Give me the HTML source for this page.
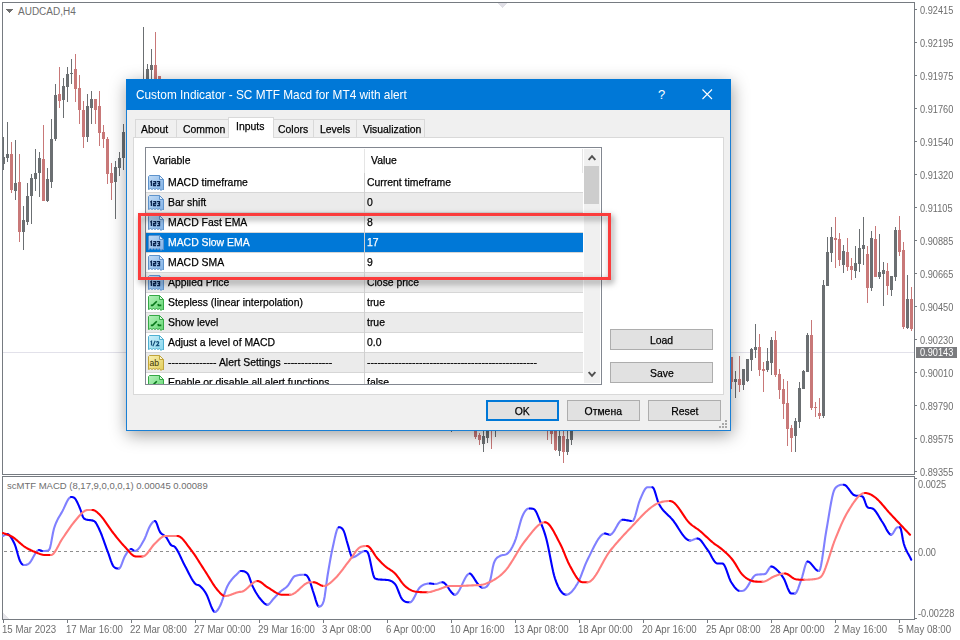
<!DOCTYPE html>
<html><head><meta charset="utf-8">
<style>
*{margin:0;padding:0;box-sizing:border-box}
html,body{width:960px;height:640px;overflow:hidden;background:#fff;font-family:"Liberation Sans",sans-serif}
.chart{position:absolute;left:0;top:0}
.pl{position:absolute;left:920px;font-size:10px;line-height:11px;color:#6e6e6e;white-space:pre;transform:scaleX(.92);transform-origin:0 0}
.tl{position:absolute;top:624px;font-size:10px;line-height:12px;color:#6e6e6e;white-space:pre;transform:scaleX(.965);transform-origin:0 0}
.cur{position:absolute;left:916px;top:347px;width:41px;height:11px;background:#7a7b7e}
.curt{position:absolute;left:920px;top:347px;font-size:10px;line-height:12px;color:#fff;white-space:pre;transform:scaleX(.92);transform-origin:0 0}
.sym{position:absolute;left:18px;top:6px;font-size:10px;line-height:12px;color:#6e6e6e;white-space:pre}
.ind{position:absolute;left:7px;top:480px;font-size:9.5px;line-height:12px;color:#6e6e6e;white-space:pre}
.dlg{position:absolute;left:126px;top:79px;width:605px;height:352px;background:#f0f0f0;border:1px solid #1a7fd4;border-top:none;box-shadow:1px 4px 16px rgba(0,0,0,0.38)}
.ttl{position:absolute;left:126px;top:79px;width:605px;height:31px;background:#0078d7}
.ttxt{position:absolute;left:136px;top:87px;font-size:13px;line-height:16px;color:#fff;white-space:pre;transform:scaleX(.91);transform-origin:0 0}
.q{position:absolute;left:658px;top:88px;font-size:13px;line-height:14px;color:#fff}
.x{position:absolute;left:702px;top:89px;width:11px;height:11px}
.tab{position:absolute;top:119px;height:18px;border:1px solid #d9d9d9;border-bottom:none;background:#f0f0f0;font-size:11.3px;line-height:12px;color:#000;white-space:pre;-webkit-text-stroke:0.25px #000}
.tab span{position:absolute;top:3px;transform:scaleX(.922);transform-origin:0 0}
.tab.on{top:117px;height:21px;background:#fff;z-index:2}
.tab.on span{top:2px}
.panel{position:absolute;left:133px;top:137px;width:591px;height:258px;background:#fff;border:1px solid #d9d9d9}
.list{position:absolute;left:145px;top:147px;width:457px;height:238px;border:1px solid #828790;background:#fff;overflow:hidden}
.hdr{position:absolute;left:0;top:0;width:438px;height:25px;font-size:11.3px;color:#000;-webkit-text-stroke:0.25px #000}
.hdr span{position:absolute;top:6px;line-height:12px;transform:scaleX(.922);transform-origin:0 0}
.hdr .hd{position:absolute;left:218px;top:1px;width:1px;height:24px;background:#e5e5e5}
.rows{position:absolute;left:0;top:25px;width:438px;height:230px}
.row{position:absolute;left:0;width:437px;height:20px;background:#fff;border-bottom:1px solid #d6d6d6;font-size:11.3px;color:#000;-webkit-text-stroke:0.25px currentColor}
.row.alt{background:#ebebeb}
.row.sel .c1,.row.sel .c2{color:#fff}
.row.sel{background:#0078d7}
.row.sel .bg{display:block}
.ic{position:absolute;left:2px;top:2px;width:16px;height:16px}
.ic svg{display:block}
.c1{position:absolute;left:21.5px;top:3px;line-height:12px;white-space:pre;transform:scaleX(.922);transform-origin:0 0}
.c2{position:absolute;left:221px;top:3px;line-height:12px;white-space:pre;transform:scaleX(.922);transform-origin:0 0}
.cd{position:absolute;left:218px;top:0;width:1px;height:20px;background:#cfcfcf}
.sb{position:absolute;left:438px;top:1px;width:16px;height:234px;background:#f0f0f0}
.thumb{position:absolute;left:0;top:17px;width:15px;height:38px;background:#cdcdcd}
.btn{position:absolute;height:21px;background:#e1e1e1;border:1px solid #adadad;font-size:11.3px;line-height:20px;text-align:center;color:#000;-webkit-text-stroke:0.25px #000}
.btn span{display:inline-block;transform:scaleX(.922)}
.btn.def{border:2px solid #0078d7;line-height:18px}
.hl{position:absolute;left:138px;top:213px;width:473px;height:67px;border:3px solid #fb3c3c;filter:drop-shadow(2px 3px 3px rgba(0,0,0,0.5))}
.grip{position:absolute;width:2px;height:2px;background:#a8a8a8}
</style></head><body>
<svg class="chart" width="960" height="640" viewBox="0 0 960 640"><g shape-rendering="crispEdges"><rect x="3" y="352" width="911" height="1" fill="#e2e1ea"/><rect x="3" y="137" width="1" height="33" fill="#6b6f72"/><rect x="2" y="157" width="3" height="7" fill="#6b6f72"/><rect x="7" y="122" width="1" height="40" fill="#6b6f72"/><rect x="6" y="154" width="3" height="4" fill="#6b6f72"/><rect x="11" y="142" width="1" height="51" fill="#c87878"/><rect x="10" y="154" width="3" height="36" fill="#c87878"/><rect x="15" y="140" width="1" height="60" fill="#6b6f72"/><rect x="14" y="183" width="3" height="8" fill="#6b6f72"/><rect x="19" y="154" width="1" height="88" fill="#c87878"/><rect x="18" y="182" width="3" height="50" fill="#c87878"/><rect x="23" y="206" width="1" height="44" fill="#6b6f72"/><rect x="22" y="220" width="3" height="12" fill="#6b6f72"/><rect x="27" y="183" width="1" height="42" fill="#6b6f72"/><rect x="26" y="196" width="3" height="26" fill="#6b6f72"/><rect x="31" y="174" width="1" height="50" fill="#6b6f72"/><rect x="30" y="178" width="3" height="18" fill="#6b6f72"/><rect x="35" y="149" width="1" height="42" fill="#6b6f72"/><rect x="34" y="173" width="3" height="6" fill="#6b6f72"/><rect x="39" y="152" width="1" height="45" fill="#6b6f72"/><rect x="38" y="158" width="3" height="15" fill="#6b6f72"/><rect x="43" y="125" width="1" height="76" fill="#c87878"/><rect x="42" y="159" width="3" height="42" fill="#c87878"/><rect x="47" y="168" width="1" height="34" fill="#6b6f72"/><rect x="46" y="179" width="3" height="22" fill="#6b6f72"/><rect x="51" y="119" width="1" height="69" fill="#6b6f72"/><rect x="50" y="139" width="3" height="43" fill="#6b6f72"/><rect x="55" y="84" width="1" height="57" fill="#6b6f72"/><rect x="54" y="95" width="3" height="44" fill="#6b6f72"/><rect x="59" y="67" width="1" height="41" fill="#c87878"/><rect x="58" y="94" width="3" height="7" fill="#c87878"/><rect x="63" y="78" width="1" height="40" fill="#6b6f72"/><rect x="62" y="86" width="3" height="14" fill="#6b6f72"/><rect x="67" y="67" width="1" height="35" fill="#6b6f72"/><rect x="66" y="74" width="3" height="13" fill="#6b6f72"/><rect x="71" y="59" width="1" height="25" fill="#6b6f72"/><rect x="70" y="73" width="3" height="1" fill="#6b6f72"/><rect x="75" y="54" width="1" height="48" fill="#c87878"/><rect x="74" y="69" width="3" height="20" fill="#c87878"/><rect x="79" y="75" width="1" height="49" fill="#c87878"/><rect x="78" y="88" width="3" height="22" fill="#c87878"/><rect x="83" y="101" width="1" height="47" fill="#c87878"/><rect x="82" y="110" width="3" height="27" fill="#c87878"/><rect x="87" y="94" width="1" height="48" fill="#6b6f72"/><rect x="86" y="106" width="3" height="31" fill="#6b6f72"/><rect x="91" y="91" width="1" height="33" fill="#6b6f72"/><rect x="90" y="99" width="3" height="9" fill="#6b6f72"/><rect x="95" y="99" width="1" height="25" fill="#c87878"/><rect x="94" y="99" width="3" height="11" fill="#c87878"/><rect x="99" y="91" width="1" height="55" fill="#c87878"/><rect x="98" y="106" width="3" height="27" fill="#c87878"/><rect x="103" y="125" width="1" height="23" fill="#c87878"/><rect x="102" y="132" width="3" height="7" fill="#c87878"/><rect x="107" y="137" width="1" height="47" fill="#c87878"/><rect x="106" y="139" width="3" height="35" fill="#c87878"/><rect x="111" y="163" width="1" height="37" fill="#c87878"/><rect x="110" y="173" width="3" height="10" fill="#c87878"/><rect x="115" y="161" width="1" height="58" fill="#6b6f72"/><rect x="114" y="167" width="3" height="15" fill="#6b6f72"/><rect x="119" y="152" width="1" height="24" fill="#6b6f72"/><rect x="118" y="158" width="3" height="10" fill="#6b6f72"/><rect x="123" y="124" width="1" height="46" fill="#6b6f72"/><rect x="122" y="132" width="3" height="26" fill="#6b6f72"/><rect x="143" y="27" width="1" height="83" fill="#6b6f72"/><rect x="142" y="90" width="3" height="10" fill="#6b6f72"/><rect x="147" y="64" width="1" height="36" fill="#6b6f72"/><rect x="146" y="69" width="3" height="26" fill="#6b6f72"/><rect x="151" y="49" width="1" height="46" fill="#6b6f72"/><rect x="150" y="65" width="3" height="5" fill="#6b6f72"/><rect x="155" y="32" width="1" height="68" fill="#c87878"/><rect x="154" y="65" width="3" height="30" fill="#c87878"/><rect x="159" y="76" width="1" height="24" fill="#c87878"/><rect x="158" y="76" width="3" height="19" fill="#c87878"/><rect x="451" y="420" width="1" height="12" fill="#6b6f72"/><rect x="450" y="420" width="3" height="5" fill="#6b6f72"/><rect x="475" y="420" width="1" height="19" fill="#c87878"/><rect x="474" y="420" width="3" height="17" fill="#c87878"/><rect x="479" y="433" width="1" height="12" fill="#c87878"/><rect x="478" y="435" width="3" height="5" fill="#c87878"/><rect x="483" y="420" width="1" height="32" fill="#6b6f72"/><rect x="482" y="436" width="3" height="8" fill="#6b6f72"/><rect x="487" y="420" width="1" height="23" fill="#6b6f72"/><rect x="486" y="420" width="3" height="18" fill="#6b6f72"/><rect x="491" y="420" width="1" height="29" fill="#c87878"/><rect x="490" y="420" width="3" height="8" fill="#c87878"/><rect x="495" y="420" width="1" height="17" fill="#6b6f72"/><rect x="494" y="420" width="3" height="6" fill="#6b6f72"/><rect x="547" y="420" width="1" height="20" fill="#c87878"/><rect x="546" y="420" width="3" height="6" fill="#c87878"/><rect x="551" y="420" width="1" height="24" fill="#c87878"/><rect x="550" y="420" width="3" height="14" fill="#c87878"/><rect x="555" y="420" width="1" height="31" fill="#c87878"/><rect x="554" y="420" width="3" height="30" fill="#c87878"/><rect x="559" y="420" width="1" height="36" fill="#6b6f72"/><rect x="558" y="436" width="3" height="15" fill="#6b6f72"/><rect x="563" y="420" width="1" height="43" fill="#c87878"/><rect x="562" y="436" width="3" height="16" fill="#c87878"/><rect x="567" y="420" width="1" height="35" fill="#6b6f72"/><rect x="566" y="439" width="3" height="13" fill="#6b6f72"/><rect x="571" y="420" width="1" height="25" fill="#6b6f72"/><rect x="570" y="420" width="3" height="20" fill="#6b6f72"/><rect x="731" y="357" width="1" height="32" fill="#c87878"/><rect x="730" y="357" width="3" height="25" fill="#c87878"/><rect x="735" y="371" width="1" height="27" fill="#6b6f72"/><rect x="734" y="379" width="3" height="3" fill="#6b6f72"/><rect x="739" y="356" width="1" height="36" fill="#c87878"/><rect x="738" y="379" width="3" height="6" fill="#c87878"/><rect x="743" y="369" width="1" height="21" fill="#6b6f72"/><rect x="742" y="369" width="3" height="16" fill="#6b6f72"/><rect x="747" y="359" width="1" height="23" fill="#6b6f72"/><rect x="746" y="359" width="3" height="22" fill="#6b6f72"/><rect x="751" y="348" width="1" height="23" fill="#6b6f72"/><rect x="750" y="349" width="3" height="11" fill="#6b6f72"/><rect x="755" y="324" width="1" height="34" fill="#6b6f72"/><rect x="754" y="347" width="3" height="3" fill="#6b6f72"/><rect x="759" y="334" width="1" height="42" fill="#c87878"/><rect x="758" y="347" width="3" height="23" fill="#c87878"/><rect x="763" y="362" width="1" height="30" fill="#c87878"/><rect x="762" y="369" width="3" height="2" fill="#c87878"/><rect x="767" y="348" width="1" height="24" fill="#6b6f72"/><rect x="766" y="361" width="3" height="9" fill="#6b6f72"/><rect x="771" y="337" width="1" height="38" fill="#6b6f72"/><rect x="770" y="340" width="3" height="23" fill="#6b6f72"/><rect x="775" y="331" width="1" height="46" fill="#c87878"/><rect x="774" y="340" width="3" height="35" fill="#c87878"/><rect x="779" y="369" width="1" height="30" fill="#c87878"/><rect x="778" y="374" width="3" height="16" fill="#c87878"/><rect x="783" y="379" width="1" height="40" fill="#c87878"/><rect x="782" y="389" width="3" height="15" fill="#c87878"/><rect x="787" y="381" width="1" height="65" fill="#c87878"/><rect x="786" y="403" width="3" height="26" fill="#c87878"/><rect x="791" y="425" width="1" height="27" fill="#c87878"/><rect x="790" y="428" width="3" height="10" fill="#c87878"/><rect x="795" y="418" width="1" height="34" fill="#6b6f72"/><rect x="794" y="421" width="3" height="15" fill="#6b6f72"/><rect x="799" y="382" width="1" height="46" fill="#6b6f72"/><rect x="798" y="388" width="3" height="34" fill="#6b6f72"/><rect x="803" y="370" width="1" height="19" fill="#6b6f72"/><rect x="802" y="371" width="3" height="18" fill="#6b6f72"/><rect x="807" y="333" width="1" height="39" fill="#6b6f72"/><rect x="806" y="335" width="3" height="37" fill="#6b6f72"/><rect x="811" y="320" width="1" height="90" fill="#c87878"/><rect x="810" y="335" width="3" height="73" fill="#c87878"/><rect x="815" y="402" width="1" height="15" fill="#c87878"/><rect x="814" y="407" width="3" height="1" fill="#c87878"/><rect x="819" y="398" width="1" height="21" fill="#c87878"/><rect x="818" y="413" width="3" height="3" fill="#c87878"/><rect x="823" y="280" width="1" height="138" fill="#6b6f72"/><rect x="822" y="285" width="3" height="131" fill="#6b6f72"/><rect x="827" y="237" width="1" height="49" fill="#6b6f72"/><rect x="826" y="252" width="3" height="34" fill="#6b6f72"/><rect x="831" y="227" width="1" height="35" fill="#6b6f72"/><rect x="830" y="237" width="3" height="16" fill="#6b6f72"/><rect x="835" y="217" width="1" height="51" fill="#c87878"/><rect x="834" y="238" width="3" height="2" fill="#c87878"/><rect x="839" y="233" width="1" height="33" fill="#c87878"/><rect x="838" y="239" width="3" height="21" fill="#c87878"/><rect x="843" y="245" width="1" height="28" fill="#6b6f72"/><rect x="842" y="251" width="3" height="14" fill="#6b6f72"/><rect x="847" y="238" width="1" height="33" fill="#c87878"/><rect x="846" y="252" width="3" height="15" fill="#c87878"/><rect x="851" y="258" width="1" height="22" fill="#c87878"/><rect x="850" y="266" width="3" height="4" fill="#c87878"/><rect x="855" y="246" width="1" height="32" fill="#6b6f72"/><rect x="854" y="263" width="3" height="8" fill="#6b6f72"/><rect x="859" y="229" width="1" height="43" fill="#6b6f72"/><rect x="858" y="248" width="3" height="16" fill="#6b6f72"/><rect x="863" y="217" width="1" height="48" fill="#6b6f72"/><rect x="862" y="245" width="3" height="4" fill="#6b6f72"/><rect x="867" y="246" width="1" height="57" fill="#c87878"/><rect x="866" y="254" width="3" height="34" fill="#c87878"/><rect x="871" y="231" width="1" height="60" fill="#6b6f72"/><rect x="870" y="238" width="3" height="50" fill="#6b6f72"/><rect x="875" y="226" width="1" height="51" fill="#c87878"/><rect x="874" y="239" width="3" height="38" fill="#c87878"/><rect x="879" y="234" width="1" height="45" fill="#6b6f72"/><rect x="878" y="272" width="3" height="5" fill="#6b6f72"/><rect x="883" y="262" width="1" height="44" fill="#6b6f72"/><rect x="882" y="270" width="3" height="4" fill="#6b6f72"/><rect x="887" y="263" width="1" height="32" fill="#c87878"/><rect x="886" y="271" width="3" height="15" fill="#c87878"/><rect x="891" y="276" width="1" height="20" fill="#6b6f72"/><rect x="890" y="276" width="3" height="14" fill="#6b6f72"/><rect x="895" y="227" width="1" height="54" fill="#6b6f72"/><rect x="894" y="230" width="3" height="47" fill="#6b6f72"/><rect x="899" y="216" width="1" height="40" fill="#c87878"/><rect x="898" y="230" width="3" height="22" fill="#c87878"/><rect x="903" y="242" width="1" height="87" fill="#c87878"/><rect x="902" y="250" width="3" height="77" fill="#c87878"/><rect x="907" y="275" width="1" height="54" fill="#6b6f72"/><rect x="906" y="299" width="3" height="29" fill="#6b6f72"/><rect x="911" y="287" width="1" height="44" fill="#c87878"/><rect x="910" y="299" width="3" height="30" fill="#c87878"/><rect x="2" y="2" width="913" height="1" fill="#767b81"/><rect x="2" y="474" width="913" height="1" fill="#767b81"/><rect x="2" y="2" width="1" height="473" fill="#767b81"/><rect x="914" y="2" width="1" height="473" fill="#767b81"/><rect x="2" y="476" width="913" height="1" fill="#767b81"/><rect x="2" y="619" width="913" height="1" fill="#767b81"/><rect x="2" y="476" width="1" height="144" fill="#767b81"/><rect x="914" y="476" width="1" height="144" fill="#767b81"/><rect x="915" y="9" width="2" height="1" fill="#767b81"/><rect x="915" y="42" width="2" height="1" fill="#767b81"/><rect x="915" y="75" width="2" height="1" fill="#767b81"/><rect x="915" y="108" width="2" height="1" fill="#767b81"/><rect x="915" y="141" width="2" height="1" fill="#767b81"/><rect x="915" y="174" width="2" height="1" fill="#767b81"/><rect x="915" y="207" width="2" height="1" fill="#767b81"/><rect x="915" y="240" width="2" height="1" fill="#767b81"/><rect x="915" y="273" width="2" height="1" fill="#767b81"/><rect x="915" y="306" width="2" height="1" fill="#767b81"/><rect x="915" y="339" width="2" height="1" fill="#767b81"/><rect x="915" y="372" width="2" height="1" fill="#767b81"/><rect x="915" y="405" width="2" height="1" fill="#767b81"/><rect x="915" y="438" width="2" height="1" fill="#767b81"/><rect x="915" y="471" width="2" height="1" fill="#767b81"/><rect x="3" y="620" width="1" height="3" fill="#767b81"/><rect x="67" y="620" width="1" height="3" fill="#767b81"/><rect x="131" y="620" width="1" height="3" fill="#767b81"/><rect x="195" y="620" width="1" height="3" fill="#767b81"/><rect x="259" y="620" width="1" height="3" fill="#767b81"/><rect x="323" y="620" width="1" height="3" fill="#767b81"/><rect x="387" y="620" width="1" height="3" fill="#767b81"/><rect x="451" y="620" width="1" height="3" fill="#767b81"/><rect x="515" y="620" width="1" height="3" fill="#767b81"/><rect x="579" y="620" width="1" height="3" fill="#767b81"/><rect x="643" y="620" width="1" height="3" fill="#767b81"/><rect x="707" y="620" width="1" height="3" fill="#767b81"/><rect x="771" y="620" width="1" height="3" fill="#767b81"/><rect x="835" y="620" width="1" height="3" fill="#767b81"/><rect x="899" y="620" width="1" height="3" fill="#767b81"/><rect x="915" y="478" width="2" height="1" fill="#767b81"/><rect x="915" y="551" width="2" height="1" fill="#767b81"/><rect x="915" y="618" width="2" height="1" fill="#767b81"/><rect x="4" y="551" width="3" height="1" fill="#8e8e8e"/><rect x="10" y="551" width="3" height="1" fill="#8e8e8e"/><rect x="16" y="551" width="3" height="1" fill="#8e8e8e"/><rect x="22" y="551" width="3" height="1" fill="#8e8e8e"/><rect x="28" y="551" width="3" height="1" fill="#8e8e8e"/><rect x="34" y="551" width="3" height="1" fill="#8e8e8e"/><rect x="40" y="551" width="3" height="1" fill="#8e8e8e"/><rect x="46" y="551" width="3" height="1" fill="#8e8e8e"/><rect x="52" y="551" width="3" height="1" fill="#8e8e8e"/><rect x="58" y="551" width="3" height="1" fill="#8e8e8e"/><rect x="64" y="551" width="3" height="1" fill="#8e8e8e"/><rect x="70" y="551" width="3" height="1" fill="#8e8e8e"/><rect x="76" y="551" width="3" height="1" fill="#8e8e8e"/><rect x="82" y="551" width="3" height="1" fill="#8e8e8e"/><rect x="88" y="551" width="3" height="1" fill="#8e8e8e"/><rect x="94" y="551" width="3" height="1" fill="#8e8e8e"/><rect x="100" y="551" width="3" height="1" fill="#8e8e8e"/><rect x="106" y="551" width="3" height="1" fill="#8e8e8e"/><rect x="112" y="551" width="3" height="1" fill="#8e8e8e"/><rect x="118" y="551" width="3" height="1" fill="#8e8e8e"/><rect x="124" y="551" width="3" height="1" fill="#8e8e8e"/><rect x="130" y="551" width="3" height="1" fill="#8e8e8e"/><rect x="136" y="551" width="3" height="1" fill="#8e8e8e"/><rect x="142" y="551" width="3" height="1" fill="#8e8e8e"/><rect x="148" y="551" width="3" height="1" fill="#8e8e8e"/><rect x="154" y="551" width="3" height="1" fill="#8e8e8e"/><rect x="160" y="551" width="3" height="1" fill="#8e8e8e"/><rect x="166" y="551" width="3" height="1" fill="#8e8e8e"/><rect x="172" y="551" width="3" height="1" fill="#8e8e8e"/><rect x="178" y="551" width="3" height="1" fill="#8e8e8e"/><rect x="184" y="551" width="3" height="1" fill="#8e8e8e"/><rect x="190" y="551" width="3" height="1" fill="#8e8e8e"/><rect x="196" y="551" width="3" height="1" fill="#8e8e8e"/><rect x="202" y="551" width="3" height="1" fill="#8e8e8e"/><rect x="208" y="551" width="3" height="1" fill="#8e8e8e"/><rect x="214" y="551" width="3" height="1" fill="#8e8e8e"/><rect x="220" y="551" width="3" height="1" fill="#8e8e8e"/><rect x="226" y="551" width="3" height="1" fill="#8e8e8e"/><rect x="232" y="551" width="3" height="1" fill="#8e8e8e"/><rect x="238" y="551" width="3" height="1" fill="#8e8e8e"/><rect x="244" y="551" width="3" height="1" fill="#8e8e8e"/><rect x="250" y="551" width="3" height="1" fill="#8e8e8e"/><rect x="256" y="551" width="3" height="1" fill="#8e8e8e"/><rect x="262" y="551" width="3" height="1" fill="#8e8e8e"/><rect x="268" y="551" width="3" height="1" fill="#8e8e8e"/><rect x="274" y="551" width="3" height="1" fill="#8e8e8e"/><rect x="280" y="551" width="3" height="1" fill="#8e8e8e"/><rect x="286" y="551" width="3" height="1" fill="#8e8e8e"/><rect x="292" y="551" width="3" height="1" fill="#8e8e8e"/><rect x="298" y="551" width="3" height="1" fill="#8e8e8e"/><rect x="304" y="551" width="3" height="1" fill="#8e8e8e"/><rect x="310" y="551" width="3" height="1" fill="#8e8e8e"/><rect x="316" y="551" width="3" height="1" fill="#8e8e8e"/><rect x="322" y="551" width="3" height="1" fill="#8e8e8e"/><rect x="328" y="551" width="3" height="1" fill="#8e8e8e"/><rect x="334" y="551" width="3" height="1" fill="#8e8e8e"/><rect x="340" y="551" width="3" height="1" fill="#8e8e8e"/><rect x="346" y="551" width="3" height="1" fill="#8e8e8e"/><rect x="352" y="551" width="3" height="1" fill="#8e8e8e"/><rect x="358" y="551" width="3" height="1" fill="#8e8e8e"/><rect x="364" y="551" width="3" height="1" fill="#8e8e8e"/><rect x="370" y="551" width="3" height="1" fill="#8e8e8e"/><rect x="376" y="551" width="3" height="1" fill="#8e8e8e"/><rect x="382" y="551" width="3" height="1" fill="#8e8e8e"/><rect x="388" y="551" width="3" height="1" fill="#8e8e8e"/><rect x="394" y="551" width="3" height="1" fill="#8e8e8e"/><rect x="400" y="551" width="3" height="1" fill="#8e8e8e"/><rect x="406" y="551" width="3" height="1" fill="#8e8e8e"/><rect x="412" y="551" width="3" height="1" fill="#8e8e8e"/><rect x="418" y="551" width="3" height="1" fill="#8e8e8e"/><rect x="424" y="551" width="3" height="1" fill="#8e8e8e"/><rect x="430" y="551" width="3" height="1" fill="#8e8e8e"/><rect x="436" y="551" width="3" height="1" fill="#8e8e8e"/><rect x="442" y="551" width="3" height="1" fill="#8e8e8e"/><rect x="448" y="551" width="3" height="1" fill="#8e8e8e"/><rect x="454" y="551" width="3" height="1" fill="#8e8e8e"/><rect x="460" y="551" width="3" height="1" fill="#8e8e8e"/><rect x="466" y="551" width="3" height="1" fill="#8e8e8e"/><rect x="472" y="551" width="3" height="1" fill="#8e8e8e"/><rect x="478" y="551" width="3" height="1" fill="#8e8e8e"/><rect x="484" y="551" width="3" height="1" fill="#8e8e8e"/><rect x="490" y="551" width="3" height="1" fill="#8e8e8e"/><rect x="496" y="551" width="3" height="1" fill="#8e8e8e"/><rect x="502" y="551" width="3" height="1" fill="#8e8e8e"/><rect x="508" y="551" width="3" height="1" fill="#8e8e8e"/><rect x="514" y="551" width="3" height="1" fill="#8e8e8e"/><rect x="520" y="551" width="3" height="1" fill="#8e8e8e"/><rect x="526" y="551" width="3" height="1" fill="#8e8e8e"/><rect x="532" y="551" width="3" height="1" fill="#8e8e8e"/><rect x="538" y="551" width="3" height="1" fill="#8e8e8e"/><rect x="544" y="551" width="3" height="1" fill="#8e8e8e"/><rect x="550" y="551" width="3" height="1" fill="#8e8e8e"/><rect x="556" y="551" width="3" height="1" fill="#8e8e8e"/><rect x="562" y="551" width="3" height="1" fill="#8e8e8e"/><rect x="568" y="551" width="3" height="1" fill="#8e8e8e"/><rect x="574" y="551" width="3" height="1" fill="#8e8e8e"/><rect x="580" y="551" width="3" height="1" fill="#8e8e8e"/><rect x="586" y="551" width="3" height="1" fill="#8e8e8e"/><rect x="592" y="551" width="3" height="1" fill="#8e8e8e"/><rect x="598" y="551" width="3" height="1" fill="#8e8e8e"/><rect x="604" y="551" width="3" height="1" fill="#8e8e8e"/><rect x="610" y="551" width="3" height="1" fill="#8e8e8e"/><rect x="616" y="551" width="3" height="1" fill="#8e8e8e"/><rect x="622" y="551" width="3" height="1" fill="#8e8e8e"/><rect x="628" y="551" width="3" height="1" fill="#8e8e8e"/><rect x="634" y="551" width="3" height="1" fill="#8e8e8e"/><rect x="640" y="551" width="3" height="1" fill="#8e8e8e"/><rect x="646" y="551" width="3" height="1" fill="#8e8e8e"/><rect x="652" y="551" width="3" height="1" fill="#8e8e8e"/><rect x="658" y="551" width="3" height="1" fill="#8e8e8e"/><rect x="664" y="551" width="3" height="1" fill="#8e8e8e"/><rect x="670" y="551" width="3" height="1" fill="#8e8e8e"/><rect x="676" y="551" width="3" height="1" fill="#8e8e8e"/><rect x="682" y="551" width="3" height="1" fill="#8e8e8e"/><rect x="688" y="551" width="3" height="1" fill="#8e8e8e"/><rect x="694" y="551" width="3" height="1" fill="#8e8e8e"/><rect x="700" y="551" width="3" height="1" fill="#8e8e8e"/><rect x="706" y="551" width="3" height="1" fill="#8e8e8e"/><rect x="712" y="551" width="3" height="1" fill="#8e8e8e"/><rect x="718" y="551" width="3" height="1" fill="#8e8e8e"/><rect x="724" y="551" width="3" height="1" fill="#8e8e8e"/><rect x="730" y="551" width="3" height="1" fill="#8e8e8e"/><rect x="736" y="551" width="3" height="1" fill="#8e8e8e"/><rect x="742" y="551" width="3" height="1" fill="#8e8e8e"/><rect x="748" y="551" width="3" height="1" fill="#8e8e8e"/><rect x="754" y="551" width="3" height="1" fill="#8e8e8e"/><rect x="760" y="551" width="3" height="1" fill="#8e8e8e"/><rect x="766" y="551" width="3" height="1" fill="#8e8e8e"/><rect x="772" y="551" width="3" height="1" fill="#8e8e8e"/><rect x="778" y="551" width="3" height="1" fill="#8e8e8e"/><rect x="784" y="551" width="3" height="1" fill="#8e8e8e"/><rect x="790" y="551" width="3" height="1" fill="#8e8e8e"/><rect x="796" y="551" width="3" height="1" fill="#8e8e8e"/><rect x="802" y="551" width="3" height="1" fill="#8e8e8e"/><rect x="808" y="551" width="3" height="1" fill="#8e8e8e"/><rect x="814" y="551" width="3" height="1" fill="#8e8e8e"/><rect x="820" y="551" width="3" height="1" fill="#8e8e8e"/><rect x="826" y="551" width="3" height="1" fill="#8e8e8e"/><rect x="832" y="551" width="3" height="1" fill="#8e8e8e"/><rect x="838" y="551" width="3" height="1" fill="#8e8e8e"/><rect x="844" y="551" width="3" height="1" fill="#8e8e8e"/><rect x="850" y="551" width="3" height="1" fill="#8e8e8e"/><rect x="856" y="551" width="3" height="1" fill="#8e8e8e"/><rect x="862" y="551" width="3" height="1" fill="#8e8e8e"/><rect x="868" y="551" width="3" height="1" fill="#8e8e8e"/><rect x="874" y="551" width="3" height="1" fill="#8e8e8e"/><rect x="880" y="551" width="3" height="1" fill="#8e8e8e"/><rect x="886" y="551" width="3" height="1" fill="#8e8e8e"/><rect x="892" y="551" width="3" height="1" fill="#8e8e8e"/><rect x="898" y="551" width="3" height="1" fill="#8e8e8e"/><rect x="904" y="551" width="3" height="1" fill="#8e8e8e"/><rect x="910" y="551" width="3" height="1" fill="#8e8e8e"/><polygon points="498,3 507,3 502.5,8" fill="#e0dfe6"/><polygon points="3,613 3,619 9,619" fill="#e6e5ea"/><polygon points="6,9 13,9 9.5,13" fill="#6e6e6e"/></g><polyline points="3.0,536.0 4.12,535.41 5.25,534.75 6.38,534.22 7.5,534.0" fill="none" stroke="#8080ff" stroke-width="2.1" stroke-linejoin="round" stroke-linecap="round"/><polyline points="7.5,534.0 8.75,534.59 10.0,536.0 11.0,537.37 12.0,538.9 13.0,540.66 14.0,542.67 15.0,545.0 16.0,547.93 17.0,551.42 18.0,555.06 19.0,558.39 20.0,561.0 21.0,562.81 22.0,564.05 23.0,564.77 24.0,565.0" fill="none" stroke="#0000ff" stroke-width="2.1" stroke-linejoin="round" stroke-linecap="round"/><polyline points="24.0,565.0 25.0,564.98 26.0,564.87 27.0,564.62 28.0,564.18 29.0,563.5 30.0,562.45 31.0,561.04 32.0,559.37 33.0,557.56 34.0,555.72 35.0,553.96 36.0,552.4 37.0,551.14 38.0,550.3 39.0,550.0" fill="none" stroke="#8080ff" stroke-width="2.1" stroke-linejoin="round" stroke-linecap="round"/><polyline points="39.0,550.0 39.88,550.16 40.75,550.5 41.62,550.84 42.5,551.0 43.58,551.0" fill="none" stroke="#0000ff" stroke-width="2.1" stroke-linejoin="round" stroke-linecap="round"/><polyline points="43.58,551.0 44.67,550.96 45.75,550.88 46.83,550.7 47.92,550.42 49.0,550.0 50.0,547.98 51.0,543.63 52.0,538.14 53.0,532.7 54.0,528.5 55.06,525.38 56.12,522.7 57.19,520.39 58.25,518.34 59.31,516.47 60.38,514.68 61.44,512.89 62.5,511.0 63.56,508.89 64.62,506.6 65.69,504.26 66.75,502.03 67.81,500.05 68.88,498.45 69.94,497.39 71.0,497.0" fill="none" stroke="#8080ff" stroke-width="2.1" stroke-linejoin="round" stroke-linecap="round"/><polyline points="71.0,497.0 72.0,497.02 73.0,497.19 74.0,497.63 75.0,498.5 76.0,499.9 77.0,501.75 78.0,503.9 79.0,506.2 80.0,508.5 81.0,511.21 82.0,514.32 83.0,517.01 84.0,518.5 85.0,519.03 86.0,519.41 87.0,519.67 88.0,519.85 89.0,519.98 90.0,520.09 91.0,520.22 92.0,520.39 93.0,520.64 94.0,521.0 95.0,521.74 96.0,523.01 97.0,524.7 98.0,526.67 99.0,528.81 100.0,531.0 100.94,533.15 101.88,535.51 102.81,538.02 103.75,540.63 104.69,543.28 105.62,545.93 106.56,548.52 107.5,551.0 108.58,553.98 109.67,557.18 110.75,560.35 111.83,563.22 112.92,565.52 114.0,567.0 115.0,567.73 116.0,568.18 117.0,568.4 118.0,568.49 119.0,568.5" fill="none" stroke="#0000ff" stroke-width="2.1" stroke-linejoin="round" stroke-linecap="round"/><polyline points="119.0,568.5 120.0,567.8 121.0,565.98 122.0,563.47 123.0,560.69 124.0,558.05 125.0,556.0 126.0,554.35 127.0,552.74 128.0,551.28 129.0,550.09 130.0,549.29 131.0,549.0" fill="none" stroke="#8080ff" stroke-width="2.1" stroke-linejoin="round" stroke-linecap="round"/><polyline points="131.0,549.0 132.0,549.31 133.0,550.0 134.0,550.69 135.0,551.0" fill="none" stroke="#0000ff" stroke-width="2.1" stroke-linejoin="round" stroke-linecap="round"/><polyline points="135.0,551.0 136.0,550.8 137.0,550.23 138.0,549.33 139.0,548.17 140.0,546.78 141.0,545.22 142.0,543.54 143.0,541.78 144.0,540.0 145.0,537.96 146.0,535.53 147.0,532.92 148.0,530.32 149.0,527.95 150.0,526.0 151.0,524.41 152.0,523.04 153.0,521.96 154.0,521.25 155.0,521.0" fill="none" stroke="#8080ff" stroke-width="2.1" stroke-linejoin="round" stroke-linecap="round"/><polyline points="155.0,521.0 156.0,521.9 157.0,524.14 158.0,527.04 159.0,529.89 160.0,532.0 161.0,533.25 162.0,534.1 163.0,534.73 164.0,535.3 165.0,536.0 166.0,537.0 167.0,538.45 168.0,540.22 169.0,542.06 170.0,543.73 171.0,545.0 172.0,545.66 173.0,545.93 174.0,546.24 175.0,547.0 176.0,548.28 177.0,549.84 178.0,551.61 179.0,553.56 180.0,555.63 181.0,557.77 182.0,559.92 183.0,562.05 184.0,564.09 185.0,566.0 186.0,567.87 187.0,569.8 188.0,571.75 189.0,573.71 190.0,575.62 191.0,577.47 192.0,579.22 193.0,580.82 194.0,582.26 195.0,583.5 196.0,584.34 197.0,584.77 198.0,585.03 199.0,585.36 200.0,586.0 201.0,586.93 202.0,587.99 203.0,589.17 204.0,590.48 205.0,591.92 206.0,593.5 207.0,595.44 208.0,597.83 209.0,600.5 210.0,603.26 211.0,605.92 212.0,608.31 213.0,610.24 214.0,611.53 215.0,612.0" fill="none" stroke="#0000ff" stroke-width="2.1" stroke-linejoin="round" stroke-linecap="round"/><polyline points="215.0,612.0 216.0,611.69 217.0,610.82 218.0,609.5 219.0,607.86 220.0,606.0 220.94,603.95 221.88,601.52 222.81,598.83 223.75,596.01 224.69,593.19 225.62,590.49 226.56,588.06 227.5,586.0 228.46,584.24 229.42,582.67 230.38,581.27 231.33,580.01 232.29,578.86 233.25,577.8 234.21,576.81 235.17,575.86 236.12,574.93 237.08,574.0 238.04,573.03 239.0,572.0 240.0,571.0 240.94,571.0" fill="none" stroke="#8080ff" stroke-width="2.1" stroke-linejoin="round" stroke-linecap="round"/><polyline points="240.94,571.0 241.88,571.04 242.81,571.13 243.75,571.31 244.69,571.61 245.62,572.05 246.56,572.67 247.5,573.5 248.5,575.11 249.5,577.62 250.5,580.58 251.5,583.53 252.5,586.0 253.44,587.9 254.38,589.71 255.31,591.42 256.25,593.03 257.19,594.54 258.12,595.96 259.06,597.28 260.0,598.5 260.94,599.67 261.88,600.79 262.81,601.85 263.75,602.8 264.69,603.6 265.62,604.21 266.56,604.61 267.5,604.75" fill="none" stroke="#0000ff" stroke-width="2.1" stroke-linejoin="round" stroke-linecap="round"/><polyline points="267.5,604.75 268.54,604.43 269.58,603.6 270.62,602.42 271.67,601.06 272.71,599.7 273.75,598.5 274.79,597.41 275.83,596.3 276.88,595.17 277.92,594.06 278.96,593.0 280.0,592.0 280.94,591.19 281.88,590.47 282.81,589.79 283.75,589.14 284.69,588.46 285.62,587.74 286.56,586.93 287.5,586.0 288.44,584.84 289.38,583.44 290.31,581.91 291.25,580.35 292.19,578.87 293.12,577.58 294.06,576.59 295.0,576.0 296.0,575.66 297.0,575.39 298.0,575.18 299.0,575.02 300.0,574.91 301.0,574.83 302.0,574.78 303.0,574.76 304.0,574.75 305.0,574.75" fill="none" stroke="#8080ff" stroke-width="2.1" stroke-linejoin="round" stroke-linecap="round"/><polyline points="305.0,574.75 305.94,574.98 306.88,575.69 307.81,576.86 308.75,578.5 309.75,580.89 310.75,583.88 311.75,587.16 312.75,590.47 313.75,593.5 314.75,596.64 315.75,600.09 316.75,603.27 317.75,605.6 318.75,606.5" fill="none" stroke="#0000ff" stroke-width="2.1" stroke-linejoin="round" stroke-linecap="round"/><polyline points="318.75,606.5 319.75,606.46 320.75,606.15 321.75,605.31 322.75,603.68 323.75,601.0 324.69,596.42 325.62,589.8 326.56,582.53 327.5,576.0 328.5,569.96 329.5,564.08 330.5,558.46 331.5,553.23 332.5,548.5 333.54,543.71 334.58,538.87 335.62,534.4 336.67,530.7 337.71,528.18 338.75,527.25" fill="none" stroke="#8080ff" stroke-width="2.1" stroke-linejoin="round" stroke-linecap="round"/><polyline points="338.75,527.25 339.75,527.31 340.75,527.59 341.75,528.21 342.75,529.3 343.75,531.0 344.69,533.5 345.62,536.78 346.56,540.3 347.5,543.5 348.5,546.88 349.5,550.53 350.5,553.87 351.5,556.31 352.5,557.25" fill="none" stroke="#0000ff" stroke-width="2.1" stroke-linejoin="round" stroke-linecap="round"/><polyline points="352.5,557.25 353.54,557.13 354.58,556.79 355.62,556.27 356.67,555.63 357.71,554.9 358.75,554.12 359.79,553.35 360.83,552.62 361.88,551.98 362.92,551.46 363.96,551.12 365.0,551.0" fill="none" stroke="#8080ff" stroke-width="2.1" stroke-linejoin="round" stroke-linecap="round"/><polyline points="365.0,551.0 366.25,551.12 367.5,552.0 368.44,553.96 369.38,557.26 370.31,561.42 371.25,565.98 372.19,570.44 373.12,574.33 374.06,577.18 375.0,578.5 375.97,578.86 376.94,579.14 377.92,579.34 378.89,579.48 379.86,579.57 380.83,579.63 381.81,579.67 382.78,579.71 383.75,579.75 384.77,579.8 385.8,579.85 386.82,579.93 387.84,580.05 388.86,580.23 389.89,580.51 390.91,580.9 391.93,581.42 392.95,582.1 393.98,582.95 395.0,584.0 395.94,585.39 396.88,587.3 397.81,589.57 398.75,592.0 399.69,594.41 400.62,596.63 401.56,598.47 402.5,599.75 403.44,600.58 404.38,601.2 405.31,601.64 406.25,601.94 407.19,602.12 408.12,602.21 409.06,602.25 410.0,602.25" fill="none" stroke="#0000ff" stroke-width="2.1" stroke-linejoin="round" stroke-linecap="round"/><polyline points="410.0,602.25 411.0,601.91 412.0,600.99 413.0,599.6 414.0,597.87 415.0,595.92 416.0,593.88 417.0,591.87 418.0,590.01 419.0,588.43 420.0,587.25 421.0,586.39 422.0,585.66 423.0,585.06 424.0,584.58 425.0,584.2 426.0,583.92 427.0,583.72 428.0,583.59 429.0,583.52 430.0,583.5" fill="none" stroke="#8080ff" stroke-width="2.1" stroke-linejoin="round" stroke-linecap="round"/><polyline points="430.0,583.5 431.0,583.55 432.0,583.68 433.0,583.82 434.0,583.95 435.0,584.0" fill="none" stroke="#0000ff" stroke-width="2.1" stroke-linejoin="round" stroke-linecap="round"/><polyline points="435.0,584.0 435.94,583.92 436.88,583.73 437.81,583.45 438.75,583.12 439.69,582.8 440.62,582.52 441.56,582.33 442.5,582.25" fill="none" stroke="#8080ff" stroke-width="2.1" stroke-linejoin="round" stroke-linecap="round"/><polyline points="442.5,582.25 443.54,582.5 444.58,583.18 445.62,584.2 446.67,585.49 447.71,586.95 448.75,588.5 449.79,590.05 450.83,591.51 451.88,592.8 452.92,593.82 453.96,594.5 455.0,594.75" fill="none" stroke="#0000ff" stroke-width="2.1" stroke-linejoin="round" stroke-linecap="round"/><polyline points="455.0,594.75 456.04,594.44 457.08,593.57 458.12,592.24 459.17,590.54 460.21,588.56 461.25,586.39 462.29,584.13 463.33,581.88 464.38,579.72 465.42,577.75 466.46,576.06 467.5,574.75 468.75,573.8 470.0,573.5" fill="none" stroke="#8080ff" stroke-width="2.1" stroke-linejoin="round" stroke-linecap="round"/><polyline points="470.0,573.5 471.25,574.36 472.5,576.0 473.5,577.39 474.5,578.98 475.5,580.61 476.5,582.17 477.5,583.5 478.5,584.69 479.5,585.84 480.5,586.82 481.5,587.5 482.5,587.75" fill="none" stroke="#0000ff" stroke-width="2.1" stroke-linejoin="round" stroke-linecap="round"/><polyline points="482.5,587.75 483.44,587.74 484.38,587.64 485.31,587.39 486.25,586.91 487.19,586.1 488.12,584.9 489.06,583.23 490.0,581.0 490.94,577.36 491.88,572.36 492.81,567.31 493.75,563.5 494.79,560.91 495.83,559.12 496.88,557.93 497.92,557.15 498.96,556.57 500.0,556.0 500.94,555.54 501.88,555.25 502.81,555.06 503.75,554.92 504.69,554.76 505.62,554.51 506.56,554.11 507.5,553.5 508.44,552.65 509.38,551.59 510.31,550.32 511.25,548.85 512.19,547.18 513.12,545.31 514.06,543.25 515.0,541.0 515.94,538.36 516.88,535.25 517.81,531.84 518.75,528.28 519.69,524.75 520.62,521.42 521.56,518.44 522.5,516.0 523.54,513.8 524.58,511.96 525.62,510.48 526.67,509.4 527.71,508.73 528.75,508.5 529.75,508.5" fill="none" stroke="#8080ff" stroke-width="2.1" stroke-linejoin="round" stroke-linecap="round"/><polyline points="529.75,508.5 530.75,508.53 531.75,508.61 532.75,508.76 533.75,509.0 534.79,509.76 535.83,511.3 536.88,513.39 537.92,515.84 538.96,518.45 540.0,521.0 541.04,523.47 542.08,526.02 543.12,528.71 544.17,531.64 545.21,534.88 546.25,538.5 547.22,542.41 548.19,546.87 549.17,551.7 550.14,556.72 551.11,561.75 552.08,566.62 553.06,571.15 554.03,575.17 555.0,578.5 556.02,581.42 557.05,584.03 558.07,586.35 559.09,588.37 560.11,590.1 561.14,591.54 562.16,592.71 563.18,593.61 564.2,594.25 565.23,594.63 566.25,594.75" fill="none" stroke="#0000ff" stroke-width="2.1" stroke-linejoin="round" stroke-linecap="round"/><polyline points="566.25,594.75 567.27,594.63 568.3,594.28 569.32,593.72 570.34,592.97 571.36,592.03 572.39,590.93 573.41,589.68 574.43,588.29 575.45,586.79 576.48,585.19 577.5,583.5 578.5,581.64 579.5,579.49 580.5,577.11 581.5,574.57 582.5,571.94 583.5,569.28 584.5,566.66 585.5,564.16 586.5,561.83 587.5,559.75 588.47,557.84 589.44,555.87 590.42,553.88 591.39,551.88 592.36,549.89 593.33,547.92 594.31,546.0 595.28,544.15 596.25,542.39 597.22,540.73 598.19,539.19 599.17,537.79 600.14,536.56 601.11,535.51 602.08,534.66 603.06,534.03 604.03,533.64 605.0,533.5" fill="none" stroke="#8080ff" stroke-width="2.1" stroke-linejoin="round" stroke-linecap="round"/><polyline points="605.0,533.5 606.0,533.63 607.0,533.94 608.0,534.31 609.0,534.62 610.0,534.75" fill="none" stroke="#0000ff" stroke-width="2.1" stroke-linejoin="round" stroke-linecap="round"/><polyline points="610.0,534.75 611.04,534.45 612.08,533.64 613.12,532.41 614.17,530.86 615.21,529.11 616.25,527.25 617.29,525.39 618.33,523.64 619.38,522.09 620.42,520.86 621.46,520.05 622.5,519.75" fill="none" stroke="#8080ff" stroke-width="2.1" stroke-linejoin="round" stroke-linecap="round"/><polyline points="622.5,519.75 623.5,519.78 624.5,519.88 625.5,520.02 626.5,520.19 627.5,520.38 628.5,520.56 629.5,520.73 630.5,520.87 631.5,520.97 632.5,521.0" fill="none" stroke="#0000ff" stroke-width="2.1" stroke-linejoin="round" stroke-linecap="round"/><polyline points="632.5,521.0 633.44,520.32 634.38,518.47 635.31,515.76 636.25,512.48 637.19,508.95 638.12,505.44 639.06,502.28 640.0,499.75 640.94,497.6 641.88,495.42 642.81,493.32 643.75,491.39 644.69,489.72 645.62,488.41 646.56,487.56 647.5,487.25 648.5,487.25 649.5,487.25 650.5,487.25 651.5,487.25 652.5,487.25" fill="none" stroke="#8080ff" stroke-width="2.1" stroke-linejoin="round" stroke-linecap="round"/><polyline points="652.5,487.25 653.54,488.18 654.58,490.59 655.62,493.9 656.67,497.54 657.71,500.93 658.75,503.5 659.73,505.26 660.71,506.84 661.7,508.27 662.68,509.56 663.66,510.74 664.64,511.83 665.62,512.84 666.61,513.81 667.59,514.74 668.57,515.67 669.55,516.62 670.54,517.6 671.52,518.63 672.5,519.75 673.47,520.96 674.44,522.28 675.42,523.68 676.39,525.15 677.36,526.67 678.33,528.2 679.31,529.73 680.28,531.24 681.25,532.71 682.22,534.12 683.19,535.44 684.17,536.65 685.14,537.74 686.11,538.68 687.08,539.44 688.06,540.02 689.03,540.38 690.0,540.5" fill="none" stroke="#0000ff" stroke-width="2.1" stroke-linejoin="round" stroke-linecap="round"/><polyline points="690.0,540.5 690.94,540.41 691.88,540.19 692.81,539.87 693.75,539.5 694.69,539.13 695.62,538.81 696.56,538.59 697.5,538.5" fill="none" stroke="#8080ff" stroke-width="2.1" stroke-linejoin="round" stroke-linecap="round"/><polyline points="697.5,538.5 698.5,538.7 699.5,539.27 700.5,540.14 701.5,541.26 702.5,542.56 703.5,543.99 704.5,545.48 705.5,546.98 706.5,548.42 707.5,549.75 708.5,551.15 709.5,552.78 710.5,554.56 711.5,556.39 712.5,558.19 713.5,559.86 714.5,561.32 715.5,562.47 716.5,563.23 717.5,563.5 718.5,563.5 719.5,563.5 720.5,563.5 721.5,563.5 722.5,563.5 723.47,563.99 724.44,565.34 725.42,567.34 726.39,569.81 727.36,572.54 728.33,575.35 729.31,578.04 730.28,580.4 731.25,582.25 732.22,583.76 733.19,585.2 734.17,586.56 735.14,587.78 736.11,588.86 737.08,589.75 738.06,590.42 739.03,590.85 740.0,591.0" fill="none" stroke="#0000ff" stroke-width="2.1" stroke-linejoin="round" stroke-linecap="round"/><polyline points="740.0,591.0 740.94,590.99 741.88,590.94 742.81,590.79 743.75,590.5 744.79,589.85 745.83,588.81 746.88,587.44 747.92,585.85 748.96,584.1 750.0,582.29 751.04,580.5 752.08,578.81 753.12,577.3 754.17,576.07 755.21,575.19 756.25,574.75 757.22,574.6 758.19,574.5 759.17,574.43 760.14,574.38 761.11,574.35 762.08,574.3 763.06,574.24 764.03,574.14 765.0,574.0 766.04,573.32 767.08,571.89 768.12,570.11 769.17,568.36 770.21,567.03 771.25,566.5" fill="none" stroke="#8080ff" stroke-width="2.1" stroke-linejoin="round" stroke-linecap="round"/><polyline points="771.25,566.5 772.29,566.66 773.33,567.09 774.38,567.75 775.42,568.57 776.46,569.51 777.5,570.5 778.54,571.55 779.58,572.7 780.62,573.97 781.67,575.35 782.71,576.86 783.75,578.5 784.69,580.32 785.62,582.57 786.56,585.05 787.5,587.54 788.44,589.83 789.38,591.73 790.31,593.02 791.25,593.5 792.19,593.5 793.12,593.5 794.06,593.5 795.0,593.5" fill="none" stroke="#0000ff" stroke-width="2.1" stroke-linejoin="round" stroke-linecap="round"/><polyline points="795.0,593.5 796.04,592.85 797.08,591.12 798.12,588.62 799.17,585.69 800.21,582.62 801.25,579.75 802.29,576.55 803.33,572.65 804.38,568.62 805.42,565.05 806.46,562.48 807.5,561.5" fill="none" stroke="#8080ff" stroke-width="2.1" stroke-linejoin="round" stroke-linecap="round"/><polyline points="807.5,561.5 808.52,561.72 809.55,562.33 810.57,563.23 811.59,564.35 812.61,565.6 813.64,566.9 814.66,568.15 815.68,569.27 816.7,570.17 817.73,570.78 818.75,571.0" fill="none" stroke="#0000ff" stroke-width="2.1" stroke-linejoin="round" stroke-linecap="round"/><polyline points="818.75,571.0 820.0,569.75 821.04,565.51 822.08,559.49 823.12,552.35 824.17,544.78 825.21,537.44 826.25,531.0 827.22,525.42 828.19,519.57 829.17,513.65 830.14,507.88 831.11,502.46 832.08,497.6 833.06,493.52 834.03,490.41 835.0,488.5 835.97,487.38 836.94,486.51 837.92,485.86 838.89,485.39 839.86,485.08 840.83,484.89 841.81,484.79 842.78,484.76 843.75,484.75" fill="none" stroke="#8080ff" stroke-width="2.1" stroke-linejoin="round" stroke-linecap="round"/><polyline points="843.75,484.75 844.77,484.99 845.8,485.63 846.82,486.61 847.84,487.82 848.86,489.18 849.89,490.59 850.91,491.98 851.93,493.26 852.95,494.33 853.98,495.1 855.0,495.5 855.94,495.63 856.88,495.71 857.81,495.77 858.75,495.82 859.69,495.9 860.62,496.02 861.56,496.22 862.5,496.5 863.5,497.75 864.5,500.25 865.5,503.19 866.5,505.79 867.5,507.25 868.5,507.71 869.5,507.94 870.5,508.06 871.5,508.2 872.5,508.5 873.5,509.1 874.5,510.02 875.5,511.2 876.5,512.6 877.5,514.15 878.5,515.8 879.5,517.48 880.5,519.16 881.5,520.77 882.5,522.25 883.47,523.76 884.44,525.48 885.42,527.31 886.39,529.15 887.36,530.88 888.33,532.42 889.31,533.64 890.28,534.46 891.25,534.75" fill="none" stroke="#0000ff" stroke-width="2.1" stroke-linejoin="round" stroke-linecap="round"/><polyline points="891.25,534.75 892.29,534.19 893.33,532.81 894.38,531.0 895.42,529.19 896.46,527.81 897.5,527.25 898.75,527.25 900.0,527.25" fill="none" stroke="#8080ff" stroke-width="2.1" stroke-linejoin="round" stroke-linecap="round"/><polyline points="900.0,527.25 900.94,529.22 901.88,533.85 902.81,539.25 903.75,543.5 904.69,546.31 905.62,548.71 906.56,550.78 907.5,552.64 908.44,554.37 909.38,556.07 910.31,557.83 911.25,559.75" fill="none" stroke="#0000ff" stroke-width="2.1" stroke-linejoin="round" stroke-linecap="round"/><polyline points="3.0,533.0 3.95,533.38 4.9,533.74 5.85,534.09 6.8,534.43 7.75,534.77 8.7,535.14 9.65,535.54 10.6,535.97 11.55,536.45 12.5,537.0 13.54,537.68 14.58,538.44 15.62,539.25 16.67,540.12 17.71,541.02 18.75,541.94 19.79,542.86 20.83,543.77 21.88,544.65 22.92,545.5 23.96,546.28 25.0,547.0 26.0,547.63 27.0,548.22 28.0,548.78 29.0,549.31 30.0,549.81 31.0,550.29 32.0,550.74 33.0,551.18 34.0,551.59 35.0,552.0 36.0,552.41 37.0,552.82 38.0,553.24 39.0,553.63 40.0,554.0 41.0,554.33 42.0,554.6 43.0,554.82 44.0,554.95 45.0,555.0 46.0,555.0 47.0,555.0 48.0,555.0 49.0,555.0 50.0,555.0 51.0,555.0" fill="none" stroke="#ff0000" stroke-width="2.1" stroke-linejoin="round" stroke-linecap="round"/><polyline points="51.0,555.0 51.96,554.78 52.92,554.16 53.88,553.19 54.83,551.93 55.79,550.44 56.75,548.79 57.71,547.02 58.67,545.19 59.62,543.37 60.58,541.61 61.54,539.97 62.5,538.5 63.54,537.01 64.58,535.48 65.62,533.94 66.67,532.39 67.71,530.85 68.75,529.32 69.79,527.81 70.83,526.34 71.88,524.91 72.92,523.54 73.96,522.23 75.0,521.0 76.04,519.79 77.08,518.54 78.12,517.28 79.17,516.04 80.21,514.84 81.25,513.72 82.29,512.69 83.33,511.8 84.38,511.05 85.42,510.48 86.46,510.13 87.5,510.0 88.5,510.0 89.5,510.0 90.5,510.0 91.5,510.0 92.5,510.0" fill="none" stroke="#ff8080" stroke-width="2.1" stroke-linejoin="round" stroke-linecap="round"/><polyline points="92.5,510.0 93.44,510.11 94.38,510.43 95.31,510.91 96.25,511.55 97.19,512.3 98.12,513.15 99.06,514.06 100.0,515.0 101.04,516.12 102.08,517.35 103.12,518.69 104.17,520.1 105.21,521.57 106.25,523.08 107.29,524.62 108.33,526.16 109.38,527.69 110.42,529.18 111.46,530.63 112.5,532.0 113.54,533.33 114.58,534.66 115.62,535.99 116.67,537.3 117.71,538.6 118.75,539.89 119.79,541.15 120.83,542.39 121.88,543.59 122.92,544.77 123.96,545.9 125.0,547.0 126.0,548.07 127.0,549.21 128.0,550.37 129.0,551.53 130.0,552.64 131.0,553.68 132.0,554.6 133.0,555.38 134.0,555.98 135.0,556.36 136.0,556.5 137.08,556.5 138.17,556.5 139.25,556.5 140.33,556.5 141.42,556.5 142.5,556.5" fill="none" stroke="#ff0000" stroke-width="2.1" stroke-linejoin="round" stroke-linecap="round"/><polyline points="142.5,556.5 143.54,556.32 144.58,555.8 145.62,554.99 146.67,553.96 147.71,552.74 148.75,551.4 149.79,549.98 150.83,548.53 151.88,547.1 152.92,545.76 153.96,544.54 155.0,543.5 156.0,542.57 157.0,541.57 158.0,540.56 159.0,539.57 160.0,538.63 161.0,537.78 162.0,537.06 163.0,536.49 164.0,536.13 165.0,536.0 166.04,536.0 167.08,536.0 168.12,536.0 169.17,536.0 170.21,536.0 171.25,536.0 172.29,536.0 173.33,536.0 174.38,536.0 175.42,536.0 176.46,536.0 177.5,536.0" fill="none" stroke="#ff8080" stroke-width="2.1" stroke-linejoin="round" stroke-linecap="round"/><polyline points="177.5,536.0 178.54,536.15 179.58,536.56 180.62,537.22 181.67,538.08 182.71,539.12 183.75,540.3 184.79,541.58 185.83,542.94 186.88,544.35 187.92,545.77 188.96,547.16 190.0,548.5 191.0,549.78 192.0,551.12 193.0,552.52 194.0,553.95 195.0,555.43 196.0,556.95 197.0,558.48 198.0,560.04 199.0,561.62 200.0,563.2 201.0,564.78 202.0,566.36 203.0,567.93 204.0,569.48 205.0,571.0 206.04,572.6 207.08,574.26 208.12,575.94 209.17,577.65 210.21,579.35 211.25,581.05 212.29,582.71 213.33,584.32 214.38,585.88 215.42,587.35 216.46,588.73 217.5,590.0 218.44,591.09 219.38,592.16 220.31,593.17 221.25,594.09 222.19,594.87 223.12,595.47 224.06,595.86 225.0,596.0" fill="none" stroke="#ff0000" stroke-width="2.1" stroke-linejoin="round" stroke-linecap="round"/><polyline points="225.0,596.0 226.0,595.95 227.0,595.83 228.0,595.63 229.0,595.37 230.0,595.06 231.0,594.71 232.0,594.34 233.0,593.95 234.0,593.57 235.0,593.19 236.0,592.83 237.0,592.51 238.0,592.23 239.0,592.0 239.88,591.89 240.75,591.83 241.62,591.73 242.5,591.5 243.5,591.03 244.5,590.42 245.5,589.67 246.5,588.84 247.5,587.93 248.5,586.98 249.5,586.01 250.5,585.06 251.5,584.15 252.5,583.3 253.5,582.54 254.5,581.91 255.5,581.42 256.5,581.11 257.5,581.0" fill="none" stroke="#ff8080" stroke-width="2.1" stroke-linejoin="round" stroke-linecap="round"/><polyline points="257.5,581.0 258.5,581.12 259.5,581.47 260.5,582.0 261.5,582.66 262.5,583.42 263.5,584.24 264.5,585.07 265.5,585.88 266.5,586.62 267.5,587.25 268.5,587.84 269.5,588.46 270.5,589.11 271.5,589.78 272.5,590.44 273.5,591.11 274.5,591.75 275.5,592.35 276.5,592.92 277.5,593.43 278.5,593.87 279.5,594.24 280.5,594.52 281.5,594.69 282.5,594.75 283.44,594.75 284.38,594.75 285.31,594.75 286.25,594.75 287.19,594.75 288.12,594.75 289.06,594.75 290.0,594.75" fill="none" stroke="#ff0000" stroke-width="2.1" stroke-linejoin="round" stroke-linecap="round"/><polyline points="290.0,594.75 291.0,594.66 292.0,594.4 293.0,593.99 294.0,593.45 295.0,592.8 296.0,592.05 297.0,591.23 298.0,590.35 299.0,589.43 300.0,588.5 301.0,587.57 302.0,586.65 303.0,585.77 304.0,584.95 305.0,584.2 306.0,583.55 307.0,583.01 308.0,582.6 309.0,582.34 310.0,582.25 310.94,582.25 311.88,582.25 312.81,582.25 313.75,582.25" fill="none" stroke="#ff8080" stroke-width="2.1" stroke-linejoin="round" stroke-linecap="round"/><polyline points="313.75,582.25 314.75,582.36 315.75,582.64 316.75,583.06 317.75,583.57 318.75,584.12 319.75,584.68 320.75,585.19 321.75,585.61 322.75,585.89 323.75,586.0" fill="none" stroke="#ff0000" stroke-width="2.1" stroke-linejoin="round" stroke-linecap="round"/><polyline points="323.75,586.0 324.77,585.91 325.8,585.64 326.82,585.21 327.84,584.65 328.86,583.97 329.89,583.2 330.91,582.34 331.93,581.42 332.95,580.47 333.98,579.48 335.0,578.5 336.0,577.5 337.0,576.44 338.0,575.31 339.0,574.13 340.0,572.9 341.0,571.63 342.0,570.33 343.0,569.01 344.0,567.67 345.0,566.32 346.0,564.98 347.0,563.64 348.0,562.32 349.0,561.02 350.0,559.75 351.0,558.44 352.0,557.02 353.0,555.55 354.0,554.06 355.0,552.61 356.0,551.22 357.0,549.95 358.0,548.84 359.0,547.92 360.0,547.25 361.0,546.79 362.0,546.46 363.0,546.23 364.0,546.1 365.0,546.03 366.0,546.0 367.0,546.0" fill="none" stroke="#ff8080" stroke-width="2.1" stroke-linejoin="round" stroke-linecap="round"/><polyline points="367.0,546.0 368.05,546.25 369.1,546.93 370.15,547.98 371.2,549.3 372.25,550.81 373.3,552.44 374.35,554.11 375.4,555.73 376.45,557.22 377.5,558.5 378.44,559.52 379.38,560.52 380.31,561.5 381.25,562.46 382.19,563.39 383.12,564.29 384.06,565.16 385.0,566.0 386.0,566.83 387.0,567.58 388.0,568.28 389.0,568.94 390.0,569.59 391.0,570.26 392.0,570.96 393.0,571.72 394.0,572.56 395.0,573.5 396.0,574.58 397.0,575.79 398.0,577.1 399.0,578.48 400.0,579.88 401.0,581.26 402.0,582.61 403.0,583.87 404.0,585.01 405.0,586.0 406.0,586.87 407.0,587.67 408.0,588.4 409.0,589.06 410.0,589.65 411.0,590.17 412.0,590.61 413.0,590.99 414.0,591.28 415.0,591.5 416.04,591.67 417.08,591.82 418.12,591.93 419.17,592.03 420.21,592.1 421.25,592.16 422.29,592.2 423.33,592.22 424.38,592.24 425.42,592.25 426.46,592.25 427.5,592.25" fill="none" stroke="#ff0000" stroke-width="2.1" stroke-linejoin="round" stroke-linecap="round"/><polyline points="427.5,592.25 428.5,592.2 429.5,592.08 430.5,591.88 431.5,591.63 432.5,591.34 433.5,591.03 434.5,590.69 435.5,590.36 436.5,590.04 437.5,589.75 438.54,589.44 439.58,589.07 440.62,588.68 441.67,588.27 442.71,587.85 443.75,587.45 444.79,587.06 445.83,586.72 446.88,586.42 447.92,586.2 448.96,586.05 450.0,586.0 450.94,586.0 451.88,586.0 452.81,586.0 453.75,586.0 454.69,586.0 455.62,586.0 456.56,586.0 457.5,586.0 458.54,585.99 459.58,585.98 460.62,585.95 461.67,585.91 462.71,585.87 463.75,585.82 464.79,585.77 465.83,585.71 466.88,585.66 467.92,585.6 468.96,585.55 470.0,585.5 471.0,585.46 472.0,585.42 473.0,585.38 474.0,585.32 475.0,585.25 476.0,585.18 477.0,585.13 478.0,585.09 479.0,585.04 480.0,584.98 481.0,584.89 482.0,584.76 483.0,584.57 484.0,584.32 485.0,584.0 486.0,583.63 487.0,583.24 488.0,582.83 489.0,582.4 490.0,581.95 491.0,581.47 492.0,580.97 493.0,580.43 494.0,579.87 495.0,579.27 496.0,578.64 497.0,577.97 498.0,577.26 499.0,576.51 500.0,575.71 501.0,574.87 502.0,573.98 503.0,573.04 504.0,572.05 505.0,571.0 506.0,569.87 507.0,568.64 508.0,567.31 509.0,565.91 510.0,564.43 511.0,562.9 512.0,561.31 513.0,559.68 514.0,558.03 515.0,556.36 516.0,554.68 517.0,553.01 518.0,551.35 519.0,549.71 520.0,548.11 521.0,546.55 522.0,545.05 523.0,543.62 524.0,542.27 525.0,541.0 526.0,539.76 527.0,538.5 528.0,537.22 529.0,535.93 530.0,534.64 531.0,533.37 532.0,532.11 533.0,530.89 534.0,529.71 535.0,528.58 536.0,527.51 537.0,526.51 538.0,525.59 539.0,524.76 540.0,524.04 541.0,523.42 542.0,522.92 543.0,522.56 544.0,522.33 545.0,522.25" fill="none" stroke="#ff8080" stroke-width="2.1" stroke-linejoin="round" stroke-linecap="round"/><polyline points="545.0,522.25 546.0,522.41 547.0,522.86 548.0,523.58 549.0,524.54 550.0,525.72 551.0,527.09 552.0,528.62 553.0,530.29 554.0,532.06 555.0,533.92 556.0,535.83 557.0,537.77 558.0,539.71 559.0,541.63 560.0,543.5 561.0,545.46 562.0,547.62 563.0,549.94 564.0,552.36 565.0,554.82 566.0,557.28 567.0,559.69 568.0,561.97 569.0,564.1 570.0,566.0 571.04,567.87 572.08,569.77 573.12,571.66 574.17,573.5 575.21,575.26 576.25,576.9 577.29,578.38 578.33,579.68 579.38,580.75 580.42,581.56 581.46,582.07 582.5,582.25 583.5,582.25 584.5,582.25 585.5,582.25 586.5,582.25 587.5,582.25" fill="none" stroke="#ff0000" stroke-width="2.1" stroke-linejoin="round" stroke-linecap="round"/><polyline points="587.5,582.25 588.52,582.12 589.55,581.73 590.57,581.12 591.59,580.29 592.61,579.27 593.64,578.07 594.66,576.72 595.68,575.24 596.7,573.64 597.73,571.94 598.75,570.16 599.77,568.32 600.8,566.45 601.82,564.56 602.84,562.66 603.86,560.78 604.89,558.95 605.91,557.17 606.93,555.46 607.95,553.85 608.98,552.36 610.0,551.0 611.0,549.75 612.0,548.52 613.0,547.31 614.0,546.11 615.0,544.92 616.0,543.75 617.0,542.6 618.0,541.45 619.0,540.32 620.0,539.2 621.0,538.09 622.0,536.99 623.0,535.91 624.0,534.83 625.0,533.76 626.0,532.69 627.0,531.63 628.0,530.58 629.0,529.54 630.0,528.5 631.0,527.46 632.0,526.4 633.0,525.34 634.0,524.26 635.0,523.19 636.0,522.11 637.0,521.04 638.0,519.97 639.0,518.9 640.0,517.85 641.0,516.8 642.0,515.77 643.0,514.75 644.0,513.76 645.0,512.78 646.0,511.83 647.0,510.9 648.0,510.01 649.0,509.14 650.0,508.31 651.0,507.52 652.0,506.76 653.0,506.04 654.0,505.37 655.0,504.75 656.0,504.18 657.0,503.67 658.0,503.21 659.0,502.8 660.0,502.44 661.0,502.13 662.0,501.87 663.0,501.64 664.0,501.46 665.0,501.31 666.0,501.19 667.0,501.1 668.0,501.04 669.0,501.01 670.0,501.0" fill="none" stroke="#ff8080" stroke-width="2.1" stroke-linejoin="round" stroke-linecap="round"/><polyline points="670.0,501.0 671.0,501.12 672.0,501.46 673.0,502.01 674.0,502.74 675.0,503.64 676.0,504.68 677.0,505.85 678.0,507.12 679.0,508.48 680.0,509.91 681.0,511.38 682.0,512.88 683.0,514.39 684.0,515.88 685.0,517.35 686.0,518.76 687.0,520.1 688.0,521.35 689.0,522.49 690.0,523.5 691.0,524.4 692.0,525.22 693.0,525.98 694.0,526.7 695.0,527.39 696.0,528.07 697.0,528.76 698.0,529.46 699.0,530.21 700.0,531.0 701.04,531.88 702.08,532.79 703.12,533.72 704.17,534.68 705.21,535.65 706.25,536.62 707.29,537.6 708.33,538.57 709.38,539.53 710.42,540.46 711.46,541.37 712.5,542.25 713.5,543.05 714.5,543.81 715.5,544.53 716.5,545.24 717.5,545.94 718.5,546.64 719.5,547.36 720.5,548.11 721.5,548.91 722.5,549.75 723.5,550.63 724.5,551.51 725.5,552.41 726.5,553.33 727.5,554.28 728.5,555.27 729.5,556.3 730.5,557.39 731.5,558.54 732.5,559.75 733.5,561.09 734.5,562.58 735.5,564.18 736.5,565.85 737.5,567.54 738.5,569.2 739.5,570.8 740.5,572.28 741.5,573.62 742.5,574.75 743.54,575.77 744.58,576.7 745.62,577.54 746.67,578.3 747.71,578.97 748.75,579.56 749.79,580.07 750.83,580.51 751.88,580.87 752.92,581.15 753.96,581.36 755.0,581.5 755.94,581.58 756.88,581.64 757.81,581.69 758.75,581.72 759.69,581.74 760.62,581.75 761.56,581.75 762.5,581.75" fill="none" stroke="#ff0000" stroke-width="2.1" stroke-linejoin="round" stroke-linecap="round"/><polyline points="762.5,581.75 763.54,581.67 764.58,581.43 765.62,581.06 766.67,580.59 767.71,580.04 768.75,579.43 769.79,578.79 770.83,578.15 771.88,577.52 772.92,576.94 773.96,576.42 775.0,576.0 776.0,575.64 777.0,575.29 778.0,574.94 779.0,574.61 780.0,574.31 781.0,574.04 782.0,573.82 783.0,573.65 784.0,573.54 785.0,573.5" fill="none" stroke="#ff8080" stroke-width="2.1" stroke-linejoin="round" stroke-linecap="round"/><polyline points="785.0,573.5 786.0,573.63 787.0,573.98 788.0,574.5 789.0,575.15 790.0,575.88 791.0,576.63 792.0,577.37 793.0,578.04 794.0,578.6 795.0,579.0 795.94,579.25 796.88,579.43 797.81,579.57 798.75,579.66 799.69,579.71 800.62,579.74 801.56,579.75 802.5,579.75 803.5,579.75 804.5,579.75" fill="none" stroke="#ff0000" stroke-width="2.1" stroke-linejoin="round" stroke-linecap="round"/><polyline points="804.5,579.75 805.5,579.74 806.5,579.73 807.5,579.7 808.5,579.67 809.5,579.62 810.5,579.56 811.5,579.48 812.5,579.38 813.5,579.26 814.5,579.11 815.5,578.94 816.5,578.73 817.5,578.5 818.5,578.23 819.5,577.85 820.5,577.23 821.5,576.24 822.5,574.75 823.54,572.71 824.58,570.31 825.62,567.63 826.67,564.7 827.71,561.6 828.75,558.38 829.79,555.1 830.83,551.81 831.88,548.57 832.92,545.45 833.96,542.49 835.0,539.75 836.04,537.15 837.08,534.57 838.12,532.03 839.17,529.52 840.21,527.06 841.25,524.67 842.29,522.35 843.33,520.12 844.38,517.98 845.42,515.95 846.46,514.04 847.5,512.25 848.47,510.65 849.44,509.05 850.42,507.48 851.39,505.94 852.36,504.44 853.33,502.98 854.31,501.59 855.28,500.26 856.25,499.02 857.22,497.86 858.19,496.8 859.17,495.85 860.14,495.02 861.11,494.32 862.08,493.76 863.06,493.34 864.03,493.09 865.0,493.0" fill="none" stroke="#ff8080" stroke-width="2.1" stroke-linejoin="round" stroke-linecap="round"/><polyline points="865.0,493.0 866.0,493.05 867.0,493.2 868.0,493.44 869.0,493.77 870.0,494.18 871.0,494.67 872.0,495.22 873.0,495.84 874.0,496.52 875.0,497.25 876.0,498.05 877.0,498.92 878.0,499.87 879.0,500.88 880.0,501.95 881.0,503.05 882.0,504.2 883.0,505.36 884.0,506.55 885.0,507.74 886.0,508.93 887.0,510.11 888.0,511.27 889.0,512.41 890.0,513.5 891.0,514.57 892.0,515.64 893.0,516.71 894.0,517.78 895.0,518.84 896.0,519.91 897.0,520.97 898.0,522.03 899.0,523.09 900.0,524.15 901.0,525.21 902.0,526.27 903.0,527.33 904.0,528.39 905.0,529.45 906.0,530.51 907.0,531.57 908.0,532.63 909.0,533.69 910,534.75" fill="none" stroke="#ff0000" stroke-width="2.1" stroke-linejoin="round" stroke-linecap="round"/></svg>
<div class="pl" style="top:5px">0.92415</div><div class="pl" style="top:38px">0.92195</div><div class="pl" style="top:71px">0.91975</div><div class="pl" style="top:104px">0.91760</div><div class="pl" style="top:137px">0.91540</div><div class="pl" style="top:170px">0.91320</div><div class="pl" style="top:203px">0.91105</div><div class="pl" style="top:236px">0.90885</div><div class="pl" style="top:269px">0.90665</div><div class="pl" style="top:302px">0.90450</div><div class="pl" style="top:335px">0.90230</div><div class="pl" style="top:368px">0.90010</div><div class="pl" style="top:401px">0.89790</div><div class="pl" style="top:434px">0.89575</div><div class="pl" style="top:467px">0.89355</div><div class="cur"></div><div class="curt">0.90143</div><div class="tl" style="left:2px">15 Mar 2023</div><div class="tl" style="left:66px">17 Mar 16:00</div><div class="tl" style="left:130px">22 Mar 08:00</div><div class="tl" style="left:194px">27 Mar 00:00</div><div class="tl" style="left:258px">29 Mar 16:00</div><div class="tl" style="left:322px">3 Apr 08:00</div><div class="tl" style="left:386px">6 Apr 00:00</div><div class="tl" style="left:450px">10 Apr 16:00</div><div class="tl" style="left:514px">13 Apr 08:00</div><div class="tl" style="left:578px">18 Apr 00:00</div><div class="tl" style="left:642px">20 Apr 16:00</div><div class="tl" style="left:706px">25 Apr 08:00</div><div class="tl" style="left:770px">28 Apr 00:00</div><div class="tl" style="left:834px">2 May 16:00</div><div class="tl" style="left:898px">5 May 08:00</div><div class="pl" style="top:479px;left:918px">0.0025</div><div class="pl" style="top:547px;left:918px">0.00</div><div class="pl" style="top:608px;left:918px">-0.00228</div><div class="sym">AUDCAD,H4</div><div class="ind">scMTF MACD (8,17,9,0,0,0,1) 0.00045 0.00089</div>
<div class="dlg"></div>
<div class="ttl"></div>
<div class="ttxt">Custom Indicator - SC MTF Macd for MT4 with alert</div>
<div class="q">?</div>
<svg class="x" style="position:absolute" width="11" height="11" viewBox="0 0 11 11"><path d="M0.5,0.5 L10,10 M10,0.5 L0.5,10" stroke="#fff" stroke-width="1.1"/></svg>
<div class="panel"></div>
<div class="tab" style="left:135px;width:42px"><span style="left:5px">About</span></div>
<div class="tab" style="left:176px;width:53px"><span style="left:6px">Common</span></div>
<div class="tab on" style="left:228px;width:46px"><span style="left:7px">Inputs</span></div>
<div class="tab" style="left:273px;width:41px"><span style="left:4px">Colors</span></div>
<div class="tab" style="left:313px;width:44px"><span style="left:6px">Levels</span></div>
<div class="tab" style="left:356px;width:69px"><span style="left:6px">Visualization</span></div>
<div class="list">
 <div class="hdr"><span style="left:7px">Variable</span><div class="hd"></div><span style="left:225px">Value</span><div class="hd" style="left:436px"></div></div>
 <div class="rows"><div class="row" style="top:0px"><div class="ic"><svg width="16" height="16" viewBox="0 0 16 16"><defs><linearGradient id="gc2dcf6" x1="0" y1="0" x2="1" y2="1"><stop offset="0" stop-color="#c2dcf6"/><stop offset="1" stop-color="#7eb0e6"/></linearGradient></defs><path d="M0.5,1.5 L1.5,0.5 L11.5,0.5 L15.5,4.5 L15.5,15 L14.5,14 L13,15.5 L11.5,13.5 L10,14.5 L8.5,13.5 L7,14.5 L5.5,13.5 L4,14.5 L2.5,13.5 L0.5,14.5 Z" fill="url(#gc2dcf6)" stroke="#5e93cc" stroke-width="1"/><path d="M11.5,0.5 L11.5,4.5 L15.5,4.5 Z" fill="#e4effb" stroke="#5e93cc" stroke-width="1"/><path d="M2.3,7.3 L3.4,6.4 L3.4,11 M5.2,6.6 L7.6,6.6 L7.6,8.7 L5.6,8.7 L5.6,10.6 L8,10.6 M9,6.6 L11.5,6.6 L11.5,10.6 L9,10.6 M9.8,8.6 L11.5,8.6" fill="none" stroke="#0b2550" stroke-width="1.35"/></svg></div><div class="c1">MACD timeframe</div><div class="cd"></div><div class="c2">Current timeframe</div></div><div class="row alt" style="top:20px"><div class="ic"><svg width="16" height="16" viewBox="0 0 16 16"><defs><linearGradient id="gc2dcf6" x1="0" y1="0" x2="1" y2="1"><stop offset="0" stop-color="#c2dcf6"/><stop offset="1" stop-color="#7eb0e6"/></linearGradient></defs><path d="M0.5,1.5 L1.5,0.5 L11.5,0.5 L15.5,4.5 L15.5,15 L14.5,14 L13,15.5 L11.5,13.5 L10,14.5 L8.5,13.5 L7,14.5 L5.5,13.5 L4,14.5 L2.5,13.5 L0.5,14.5 Z" fill="url(#gc2dcf6)" stroke="#5e93cc" stroke-width="1"/><path d="M11.5,0.5 L11.5,4.5 L15.5,4.5 Z" fill="#e4effb" stroke="#5e93cc" stroke-width="1"/><path d="M2.3,7.3 L3.4,6.4 L3.4,11 M5.2,6.6 L7.6,6.6 L7.6,8.7 L5.6,8.7 L5.6,10.6 L8,10.6 M9,6.6 L11.5,6.6 L11.5,10.6 L9,10.6 M9.8,8.6 L11.5,8.6" fill="none" stroke="#0b2550" stroke-width="1.35"/></svg></div><div class="c1">Bar shift</div><div class="cd"></div><div class="c2">0</div></div><div class="row" style="top:40px"><div class="ic"><svg width="16" height="16" viewBox="0 0 16 16"><defs><linearGradient id="gc2dcf6" x1="0" y1="0" x2="1" y2="1"><stop offset="0" stop-color="#c2dcf6"/><stop offset="1" stop-color="#7eb0e6"/></linearGradient></defs><path d="M0.5,1.5 L1.5,0.5 L11.5,0.5 L15.5,4.5 L15.5,15 L14.5,14 L13,15.5 L11.5,13.5 L10,14.5 L8.5,13.5 L7,14.5 L5.5,13.5 L4,14.5 L2.5,13.5 L0.5,14.5 Z" fill="url(#gc2dcf6)" stroke="#5e93cc" stroke-width="1"/><path d="M11.5,0.5 L11.5,4.5 L15.5,4.5 Z" fill="#e4effb" stroke="#5e93cc" stroke-width="1"/><path d="M2.3,7.3 L3.4,6.4 L3.4,11 M5.2,6.6 L7.6,6.6 L7.6,8.7 L5.6,8.7 L5.6,10.6 L8,10.6 M9,6.6 L11.5,6.6 L11.5,10.6 L9,10.6 M9.8,8.6 L11.5,8.6" fill="none" stroke="#0b2550" stroke-width="1.35"/></svg></div><div class="c1">MACD Fast EMA</div><div class="cd"></div><div class="c2">8</div></div><div class="row alt sel" style="top:60px"><div class="ic"><svg width="16" height="16" viewBox="0 0 16 16"><defs><linearGradient id="gc2dcf6" x1="0" y1="0" x2="1" y2="1"><stop offset="0" stop-color="#c2dcf6"/><stop offset="1" stop-color="#7eb0e6"/></linearGradient></defs><path d="M0.5,1.5 L1.5,0.5 L11.5,0.5 L15.5,4.5 L15.5,15 L14.5,14 L13,15.5 L11.5,13.5 L10,14.5 L8.5,13.5 L7,14.5 L5.5,13.5 L4,14.5 L2.5,13.5 L0.5,14.5 Z" fill="url(#gc2dcf6)" stroke="#5e93cc" stroke-width="1"/><path d="M11.5,0.5 L11.5,4.5 L15.5,4.5 Z" fill="#e4effb" stroke="#5e93cc" stroke-width="1"/><path d="M2.3,7.3 L3.4,6.4 L3.4,11 M5.2,6.6 L7.6,6.6 L7.6,8.7 L5.6,8.7 L5.6,10.6 L8,10.6 M9,6.6 L11.5,6.6 L11.5,10.6 L9,10.6 M9.8,8.6 L11.5,8.6" fill="none" stroke="#0b2550" stroke-width="1.35"/></svg></div><div class="c1">MACD Slow EMA</div><div class="cd"></div><div class="c2">17</div></div><div class="row" style="top:80px"><div class="ic"><svg width="16" height="16" viewBox="0 0 16 16"><defs><linearGradient id="gc2dcf6" x1="0" y1="0" x2="1" y2="1"><stop offset="0" stop-color="#c2dcf6"/><stop offset="1" stop-color="#7eb0e6"/></linearGradient></defs><path d="M0.5,1.5 L1.5,0.5 L11.5,0.5 L15.5,4.5 L15.5,15 L14.5,14 L13,15.5 L11.5,13.5 L10,14.5 L8.5,13.5 L7,14.5 L5.5,13.5 L4,14.5 L2.5,13.5 L0.5,14.5 Z" fill="url(#gc2dcf6)" stroke="#5e93cc" stroke-width="1"/><path d="M11.5,0.5 L11.5,4.5 L15.5,4.5 Z" fill="#e4effb" stroke="#5e93cc" stroke-width="1"/><path d="M2.3,7.3 L3.4,6.4 L3.4,11 M5.2,6.6 L7.6,6.6 L7.6,8.7 L5.6,8.7 L5.6,10.6 L8,10.6 M9,6.6 L11.5,6.6 L11.5,10.6 L9,10.6 M9.8,8.6 L11.5,8.6" fill="none" stroke="#0b2550" stroke-width="1.35"/></svg></div><div class="c1">MACD SMA</div><div class="cd"></div><div class="c2">9</div></div><div class="row alt" style="top:100px"><div class="ic"><svg width="16" height="16" viewBox="0 0 16 16"><defs><linearGradient id="gc2dcf6" x1="0" y1="0" x2="1" y2="1"><stop offset="0" stop-color="#c2dcf6"/><stop offset="1" stop-color="#7eb0e6"/></linearGradient></defs><path d="M0.5,1.5 L1.5,0.5 L11.5,0.5 L15.5,4.5 L15.5,15 L14.5,14 L13,15.5 L11.5,13.5 L10,14.5 L8.5,13.5 L7,14.5 L5.5,13.5 L4,14.5 L2.5,13.5 L0.5,14.5 Z" fill="url(#gc2dcf6)" stroke="#5e93cc" stroke-width="1"/><path d="M11.5,0.5 L11.5,4.5 L15.5,4.5 Z" fill="#e4effb" stroke="#5e93cc" stroke-width="1"/><path d="M2.3,7.3 L3.4,6.4 L3.4,11 M5.2,6.6 L7.6,6.6 L7.6,8.7 L5.6,8.7 L5.6,10.6 L8,10.6 M9,6.6 L11.5,6.6 L11.5,10.6 L9,10.6 M9.8,8.6 L11.5,8.6" fill="none" stroke="#0b2550" stroke-width="1.35"/></svg></div><div class="c1">Applied Price</div><div class="cd"></div><div class="c2">Close price</div></div><div class="row" style="top:120px"><div class="ic"><svg width="16" height="16" viewBox="0 0 16 16"><defs><linearGradient id="gb6f2bd" x1="0" y1="0" x2="1" y2="1"><stop offset="0" stop-color="#b6f2bd"/><stop offset="1" stop-color="#62d672"/></linearGradient></defs><path d="M0.5,1.5 L1.5,0.5 L11.5,0.5 L15.5,4.5 L15.5,15 L14.5,14 L13,15.5 L11.5,13.5 L10,14.5 L8.5,13.5 L7,14.5 L5.5,13.5 L4,14.5 L2.5,13.5 L0.5,14.5 Z" fill="url(#gb6f2bd)" stroke="#35a846" stroke-width="1"/><path d="M11.5,0.5 L11.5,4.5 L15.5,4.5 Z" fill="#dcf8df" stroke="#35a846" stroke-width="1"/><path d="M2.8,10.4 L4.6,10.4 L8.8,6.2 M10,9 L10.5,10.4 L13.3,10.4" fill="none" stroke="#08761a" stroke-width="1.6"/></svg></div><div class="c1">Stepless (linear interpolation)</div><div class="cd"></div><div class="c2">true</div></div><div class="row alt" style="top:140px"><div class="ic"><svg width="16" height="16" viewBox="0 0 16 16"><defs><linearGradient id="gb6f2bd" x1="0" y1="0" x2="1" y2="1"><stop offset="0" stop-color="#b6f2bd"/><stop offset="1" stop-color="#62d672"/></linearGradient></defs><path d="M0.5,1.5 L1.5,0.5 L11.5,0.5 L15.5,4.5 L15.5,15 L14.5,14 L13,15.5 L11.5,13.5 L10,14.5 L8.5,13.5 L7,14.5 L5.5,13.5 L4,14.5 L2.5,13.5 L0.5,14.5 Z" fill="url(#gb6f2bd)" stroke="#35a846" stroke-width="1"/><path d="M11.5,0.5 L11.5,4.5 L15.5,4.5 Z" fill="#dcf8df" stroke="#35a846" stroke-width="1"/><path d="M2.8,10.4 L4.6,10.4 L8.8,6.2 M10,9 L10.5,10.4 L13.3,10.4" fill="none" stroke="#08761a" stroke-width="1.6"/></svg></div><div class="c1">Show level</div><div class="cd"></div><div class="c2">true</div></div><div class="row" style="top:160px"><div class="ic"><svg width="16" height="16" viewBox="0 0 16 16"><defs><linearGradient id="gcdf0fa" x1="0" y1="0" x2="1" y2="1"><stop offset="0" stop-color="#cdf0fa"/><stop offset="1" stop-color="#86d6ee"/></linearGradient></defs><path d="M0.5,1.5 L1.5,0.5 L11.5,0.5 L15.5,4.5 L15.5,15 L14.5,14 L13,15.5 L11.5,13.5 L10,14.5 L8.5,13.5 L7,14.5 L5.5,13.5 L4,14.5 L2.5,13.5 L0.5,14.5 Z" fill="url(#gcdf0fa)" stroke="#4fb0d0" stroke-width="1"/><path d="M11.5,0.5 L11.5,4.5 L15.5,4.5 Z" fill="#e8f8fd" stroke="#4fb0d0" stroke-width="1"/><path d="M2.6,7 L3.5,6.3 L3.5,10.6 M7.2,5.8 L4.8,11.3 M8.3,7.3 Q9.5,6 10.6,7 Q11.2,8 8.6,10.6 L11.4,10.6" fill="none" stroke="#14507a" stroke-width="1.2"/></svg></div><div class="c1">Adjust a level of MACD</div><div class="cd"></div><div class="c2">0.0</div></div><div class="row alt" style="top:180px"><div class="ic"><svg width="16" height="16" viewBox="0 0 16 16"><defs><linearGradient id="gf9f0b0" x1="0" y1="0" x2="1" y2="1"><stop offset="0" stop-color="#f9f0b0"/><stop offset="1" stop-color="#e2cd5a"/></linearGradient></defs><path d="M0.5,1.5 L1.5,0.5 L11.5,0.5 L15.5,4.5 L15.5,15 L14.5,14 L13,15.5 L11.5,13.5 L10,14.5 L8.5,13.5 L7,14.5 L5.5,13.5 L4,14.5 L2.5,13.5 L0.5,14.5 Z" fill="url(#gf9f0b0)" stroke="#bfa43a" stroke-width="1"/><path d="M11.5,0.5 L11.5,4.5 L15.5,4.5 Z" fill="#fcf6d6" stroke="#bfa43a" stroke-width="1"/><text x="1.6" y="11.2" font-family="Liberation Sans" font-size="8.6" fill="#3b3300">ab</text></svg></div><div class="c1">-------------- Alert Settings --------------</div><div class="cd"></div><div class="c2">-------------------------------------------------</div></div><div class="row" style="top:200px"><div class="ic"><svg width="16" height="16" viewBox="0 0 16 16"><defs><linearGradient id="gb6f2bd" x1="0" y1="0" x2="1" y2="1"><stop offset="0" stop-color="#b6f2bd"/><stop offset="1" stop-color="#62d672"/></linearGradient></defs><path d="M0.5,1.5 L1.5,0.5 L11.5,0.5 L15.5,4.5 L15.5,15 L14.5,14 L13,15.5 L11.5,13.5 L10,14.5 L8.5,13.5 L7,14.5 L5.5,13.5 L4,14.5 L2.5,13.5 L0.5,14.5 Z" fill="url(#gb6f2bd)" stroke="#35a846" stroke-width="1"/><path d="M11.5,0.5 L11.5,4.5 L15.5,4.5 Z" fill="#dcf8df" stroke="#35a846" stroke-width="1"/><path d="M2.8,10.4 L4.6,10.4 L8.8,6.2 M10,9 L10.5,10.4 L13.3,10.4" fill="none" stroke="#08761a" stroke-width="1.6"/></svg></div><div class="c1">Enable or disable all alert functions</div><div class="cd"></div><div class="c2">false</div></div></div>
 <div class="sb">
  <svg style="position:absolute;left:3.5px;top:5px" width="8" height="7" viewBox="0 0 8 7"><path d="M0.7,6 L4,2.2 L7.3,6" fill="none" stroke="#505050" stroke-width="1.9"/></svg>
  <div class="thumb"></div>
  <svg style="position:absolute;left:3.5px;top:222px" width="8" height="7" viewBox="0 0 8 7"><path d="M0.7,1 L4,4.8 L7.3,1" fill="none" stroke="#505050" stroke-width="1.9"/></svg>
 </div>
</div>
<div class="btn" style="left:610px;top:329px;width:103px"><span>Load</span></div>
<div class="btn" style="left:610px;top:362px;width:103px"><span>Save</span></div>
<div class="btn def" style="left:486px;top:400px;width:73px"><span>OK</span></div>
<div class="btn" style="left:567px;top:400px;width:73px"><span>Отмена</span></div>
<div class="btn" style="left:648px;top:400px;width:73px"><span>Reset</span></div>
<div class="grip" style="left:725px;top:420px"></div>
<div class="grip" style="left:722px;top:423px"></div><div class="grip" style="left:725px;top:423px"></div>
<div class="grip" style="left:719px;top:426px"></div><div class="grip" style="left:722px;top:426px"></div><div class="grip" style="left:725px;top:426px"></div>
<div class="hl"></div>
</body></html>
